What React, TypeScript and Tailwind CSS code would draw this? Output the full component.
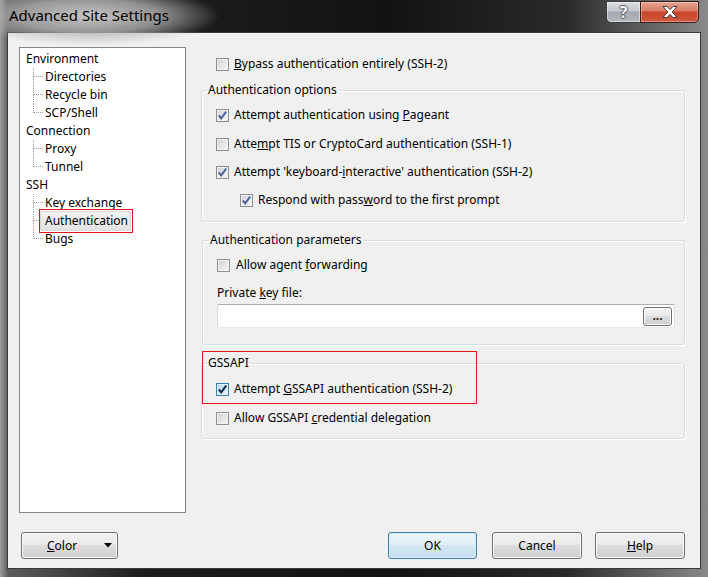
import type { ReactNode } from "react"

const cn = (...c: (string | false | undefined)[]) => c.filter(Boolean).join(" ")

const CheckBox: React.FC<{ checked?: boolean; hot?: boolean }> = ({ checked, hot }) => (
	<span
		className={cn(
			"flex h-[13px] w-[13px] shrink-0 items-center justify-center border",
			hot
				? "border-[#3c7fb1] bg-[linear-gradient(135deg,#b1dbf3,#e8f6fe)] shadow-[inset_0_0_0_1px_#def1fc]"
				: "border-[#8f8f8f] bg-[linear-gradient(135deg,#cfd1d4,#f7f7f7)] shadow-[inset_0_0_0_1px_#f2f2f2]",
		)}
	>
		{checked && (
			<svg width="11" height="11" viewBox="0 0 11 11" aria-hidden="true">
				<path
					d="M1.8 5.4 L4.2 8.4 L9.2 1.6"
					fill="none"
					stroke={hot ? "#1a2a57" : "#4a5f9c"}
					strokeWidth={hot ? 2.1 : 1.8}
				/>
			</svg>
		)}
	</span>
)

const Row: React.FC<{ checked?: boolean; hot?: boolean; gap?: string; children: ReactNode }> = ({
	checked,
	hot,
	gap = "gap-[5px]",
	children,
}) => (
	<div className={cn("flex h-[20px] items-center", gap)}>
		<CheckBox checked={checked} hot={hot} />
		<span className="whitespace-nowrap">{children}</span>
	</div>
)

const Group: React.FC<{ title: string; legendClass: string; className?: string; children: ReactNode }> = ({
	title,
	legendClass,
	className,
	children,
}) => (
	<fieldset
		className={cn(
			"rounded-[3px] border border-[#d5dfe5] shadow-[inset_1px_1px_0_#fff,1px_1px_0_#fff]",
			className,
		)}
	>
		<legend className={cn("px-[1px] leading-[16px]", legendClass)}>{title}</legend>
		{children}
	</fieldset>
)

const WinButton: React.FC<{ primary?: boolean; className?: string; children: ReactNode }> = ({
	primary,
	className,
	children,
}) => (
	<div
		className={cn(
			"flex h-[27px] items-center rounded-[3px] border",
			primary
				? "border-[#3c7fb1] bg-[linear-gradient(#eef6fb_0%,#e2eef6_45%,#d3e6f2_50%,#c6dfee_100%)] shadow-[inset_0_0_0_1px_#d8ecf9]"
				: "border-[#707070] bg-[linear-gradient(#f2f2f2_0%,#ebebeb_45%,#dddddd_50%,#cfcfcf_100%)] shadow-[inset_0_0_0_1px_#fbfbfb]",
			className,
		)}
	>
		{children}
	</div>
)

const tree = [
	{ label: "Environment", children: ["Directories", "Recycle bin", "SCP/Shell"] },
	{ label: "Connection", children: ["Proxy", "Tunnel"] },
	{ label: "SSH", children: ["Key exchange", "Authentication", "Bugs"] },
]

const Tree = () => (
	<div className="flex h-[466px] w-[167px] flex-col border border-[#828790] bg-white pt-[2px]">
		{tree.map((node) => (
			<div key={node.label} className="flex flex-col">
				<div className="flex h-[18px] items-center pl-[6px]">{node.label}</div>
				{node.children.map((child, i) => {
					const last = i === node.children.length - 1
					const selected = child === "Authentication"
					return (
						<div key={child} className="flex h-[18px] pl-[13px]">
							<div className="flex w-[10px] flex-col">
								<div className="h-[9px] border-b border-l border-dotted border-[#a0a0a0]" />
								<div className={cn("flex-1", !last && "border-l border-dotted border-[#a0a0a0]")} />
							</div>
							{selected ? (
								<span className="relative -ml-[3px] flex h-[20px] items-center self-center rounded-[2px] border border-[#d9d9d9] bg-[linear-gradient(#f2f2f2,#e3e3e3)] pl-[4px] pr-[2px]">
									{child}
									<span className="absolute -bottom-[3px] -left-[2px] -right-[3px] -top-[3px] border border-[#e5151c]" />
								</span>
							) : (
								<span className="ml-[2px] flex items-center">{child}</span>
							)}
						</div>
					)
				})}
			</div>
		))}
	</div>
)

export default function App() {
	return (
		<div className="relative flex h-[577px] w-[708px] flex-col overflow-hidden bg-[linear-gradient(90deg,#9c9c9c_0px,#5c5c5c_8px,#1e1e1e_140px,#121212_55%,#2a2a2a_80%,#8a8a8a_100%)] font-['Noto_Sans',sans-serif] text-[12px] leading-[16px] text-black">
			{/* title bar */}
			<div className="flex h-[32px] shrink-0 items-start justify-between">
				<div className="relative pl-[9px] pt-[5px]">
					<div className="absolute -left-[40px] -top-[14px] h-[60px] w-[260px] rounded-full bg-[radial-gradient(closest-side,rgba(205,205,205,0.95)_0%,rgba(180,180,180,0.75)_55%,rgba(150,150,150,0)_100%)]" />
					<span className="relative whitespace-nowrap text-[15px] leading-[20px] text-black">
						Advanced Site Settings
					</span>
				</div>
				<div className="mr-[9px] mt-[1px] flex">
					<div className="flex h-[22px] w-[35px] items-center justify-center rounded-bl-[5px] border border-[#3d3d3d] bg-[linear-gradient(#dadde1_0%,#c3c7cc_45%,#a4a9b0_50%,#b4b8bd_100%)] shadow-[inset_0_0_0_1px_rgba(255,255,255,0.45)]">
						<span className="text-[16px] font-bold leading-[16px] text-white [text-shadow:1px_0_#555,-1px_0_#555,0_1px_#555,0_-1px_#555]">
							?
						</span>
					</div>
					<div className="-ml-[1px] flex h-[22px] w-[59px] items-center justify-center rounded-br-[5px] border border-[#3d1a14] bg-[linear-gradient(#e6a593_0%,#d97a64_45%,#c6442b_50%,#d05a3c_100%)] shadow-[inset_0_0_0_1px_rgba(255,255,255,0.35)]">
						<svg width="16" height="12" viewBox="0 0 16 12" aria-hidden="true">
							<polygon
								points="1,0.5 5,0.5 8,3.6 11,0.5 15,0.5 10.2,6 15,11.5 11,11.5 8,8.4 5,11.5 1,11.5 5.8,6"
								fill="#fff"
								stroke="#3a2a28"
								strokeWidth="0.9"
							/>
						</svg>
					</div>
				</div>
			</div>

			{/* client area */}
			<div className="mx-[7px] flex h-[537px] flex-col border border-[#3a3a3a] bg-[#f0f0f0]">
				<div className="flex pl-[11px] pt-[14px]">
					<Tree />

					<div className="ml-[15px] flex w-[484px] flex-col">
						<div className="mt-[7px] pl-[15px]">
							<Row>
								<u>B</u>ypass authentication entirely (SSH-2)
							</Row>
						</div>

						<Group title="Authentication options" legendClass="-ml-[9px]" className="mt-[8px] pb-[11px] pl-[14px]">
							<div className="mt-[7px] flex flex-col">
								<Row checked>
									Attempt authentication using <u>P</u>ageant
								</Row>
								<div className="mt-[9px]">
									<Row>
										Atte<u>m</u>pt TIS or CryptoCard authentication (SSH-1)
									</Row>
								</div>
								<div className="mt-[8px]">
									<Row checked>
										Attempt 'keyboard-<u>i</u>nteractive' authentication (SSH-2)
									</Row>
								</div>
								<div className="mt-[8px] pl-[24px]">
									<Row checked>
										Respond with pass<u>w</u>ord to the first prompt
									</Row>
								</div>
							</div>
						</Group>

						<Group
							title="Authentication parameters"
							legendClass="-ml-[8px]"
							className="ml-[1px] mt-[10px] pb-[16px] pl-[14px] pr-[9px]"
						>
							<div className="mt-[7px]">
								<Row gap="gap-[6px]">
									Allow agent <u>f</u>orwarding
								</Row>
							</div>
							<div className="mt-[10px] h-[16px]">
								Private <u>k</u>ey file:
							</div>
							<div className="mt-[3px] flex h-[24px] items-center justify-end rounded-[2px] border border-x-[#dbdfe6] border-b-[#e3e9ef] border-t-[#abadb3] bg-white pr-[2px]">
								<div className="flex h-[19px] w-[29px] items-center justify-center rounded-[3px] border border-[#707070] bg-[linear-gradient(#f2f2f2_0%,#ebebeb_45%,#dddddd_50%,#cfcfcf_100%)] shadow-[inset_0_0_0_1px_#fbfbfb]">
									<span className="text-[12px] font-bold leading-[12px] text-[#1c1c1c]">...</span>
								</div>
							</div>
						</Group>

						<div className="relative mt-[10px]">
							<Group title="GSSAPI" legendClass="-ml-[9px]" className="pb-[10px] pl-[14px]">
								<div className="mt-[8px]">
									<Row checked hot>
										Attempt <u>G</u>SSAPI authentication (SSH-2)
									</Row>
								</div>
								<div className="mt-[9px]">
									<Row>
										Allow GSSAPI <u>c</u>redential delegation
									</Row>
								</div>
							</Group>
							<div className="absolute left-[1px] top-[-4px] h-[53px] w-[275px] border border-[#e5151c]" />
						</div>
					</div>
				</div>

				{/* buttons */}
				<div className="mt-[19px] flex items-center justify-between pl-[13px] pr-[15px]">
					<WinButton className="w-[97px] pl-[25px] pr-[5px]">
						<span>
							<u>C</u>olor
						</span>
						<svg className="ml-auto" width="8" height="5" viewBox="0 0 8 5" aria-hidden="true">
							<polygon points="0,0 8,0 4,4.5" fill="#000" />
						</svg>
					</WinButton>
					<div className="flex">
						<WinButton primary className="w-[89px] justify-center">
							OK
						</WinButton>
						<WinButton className="ml-[15px] w-[90px] justify-center">Cancel</WinButton>
						<WinButton className="ml-[13px] w-[90px] justify-center">
							<span>
								<u>H</u>elp
							</span>
						</WinButton>
					</div>
				</div>
			</div>
		</div>
	)
}
